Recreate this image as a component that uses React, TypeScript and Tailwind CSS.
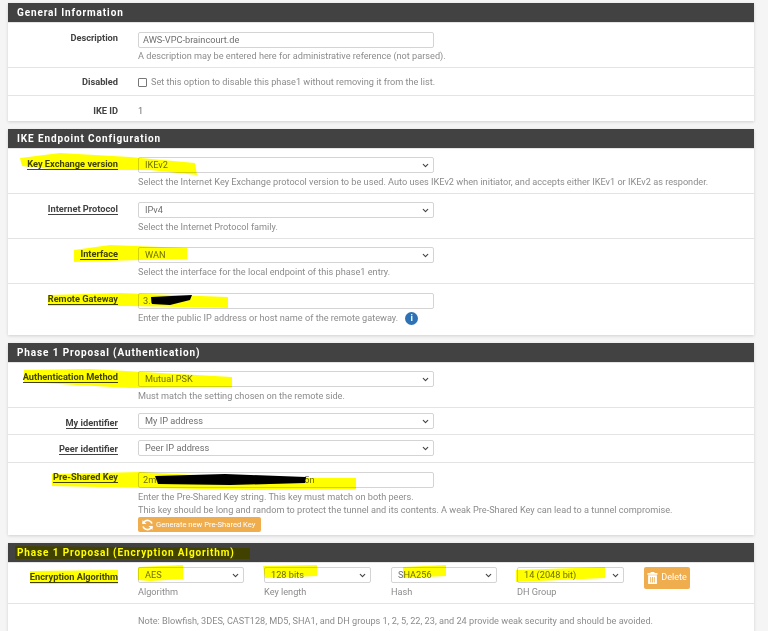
import React from 'react';
import { ChevronDown } from 'lucide-react';

const font = { fontFamily: 'Roboto, "Liberation Sans", sans-serif' };

// champ en lecture, largeur fixe
const TextBox = ({ value }: { value: string }) => (
  <div className="w-[296px] h-[16px] flex items-center px-[4px] bg-white border border-[#d4d4d4] rounded-[2px] text-[9.2px] text-[#6f6f6f] whitespace-pre">
    {value}
  </div>
);

const SelectBox = ({ value, className }: { value: string; className: string }) => (
  <div className={`h-[16px] flex items-center justify-between pl-[6px] pr-[3px] bg-white border border-[#d4d4d4] rounded-[2px] text-[9.2px] text-[#6f6f6f] ${className}`}>
    <span>{value}</span>
    <ChevronDown size={9} strokeWidth={3} className="text-[#444]" />
  </div>
);

const Help = ({ children }: { children: React.ReactNode }) => (
  <div className="text-[9.16px] leading-[13px] text-[#8c8c8c] whitespace-nowrap">{children}</div>
);

const Row = ({ label, link, className, labelClass = '', children }: { label?: string; link?: boolean; className: string; labelClass?: string; children: React.ReactNode }) => (
  <div className={`flex border-t border-[#e4e4e4] ${className}`}>
    <div className={`w-[110px] shrink-0 text-right text-[9.25px] leading-[13px] font-bold text-[#424242] ${labelClass}`}>
      <span className={link ? 'border-b border-[#424242]' : ''}>{label}</span>
    </div>
    <div className="ml-[20px] flex flex-col">{children}</div>
  </div>
);

const Panel = ({ title, children }: { title: string; children: React.ReactNode }) => (
  <section className="bg-white shadow-[0_1px_3px_rgba(0,0,0,0.15)]">
    <h2 className="h-[19px] pl-[9px] flex items-center bg-[#424242] text-white text-[10px] font-bold tracking-[0.88px]">{title}</h2>
    {children}
  </section>
);

const Caption = ({ select, caption, className }: { select: string; caption: string; className: string }) => (
  <div className="flex flex-col">
    <SelectBox value={select} className={className} />
    <div className="mt-[3px]"><Help>{caption}</Help></div>
  </div>
);

// trait de surligneur + censure, dessinés à la main sur la capture
const Marker = () => (
  <svg className="absolute left-0 top-0 w-[768px] h-[631px] pointer-events-none mix-blend-multiply" viewBox="0 0 768 631">
    <g fill="#ffff00">
      <path d="M20 158 L60 153 L130 157 L195 163 L197 175 L150 170 L60 170 L22 166 Z" />
      <path d="M74 250 L110 245 L187 248 L187 259 L140 260 L74 262 Z" />
      <path d="M48 295 L120 293 L228 297 L228 308 L130 306 L48 306 Z" />
      <path d="M24 370 L90 369 L232 377 L232 387 L130 388 L24 382 Z" />
      <path d="M52 474 L140 472 L250 478 L356 478 L356 489 L250 490 L52 486 Z" />
      <path d="M30 571 L118 570 L118 584 L30 584 Z" />
      <path d="M138 567 L183 565 L183 579 L150 581 L138 580 Z" />
      <path d="M263 566 L317 565 L317 576 L265 578 Z" />
      <path d="M403 567 L446 565 L446 576 L403 578 Z" />
      <path d="M516 570 L605 567 L605 578 L516 582 Z" />
      <path d="M15 546 L250 548 L250 559 L15 559 Z" />
    </g>
    <g fill="#000000">
      <path d="M151 297 L192 295 L190 300 L170 305 L152 304 Z" />
      <path d="M155 476 L225 474 L306 477 L305 483 L230 485 L158 484 Z" />
    </g>
  </svg>
);

export default function App() {
  return (
    <div className="relative w-[768px] h-[631px] overflow-hidden bg-[#f5f5f5] px-[8px] pt-[3px] flex flex-col gap-[8px] blur-[0.3px]" style={font}>
      <div className="w-[746px] flex flex-col gap-[8px]">
        <Panel title="General Information">
          <Row label="Description" labelClass="-mt-[1px]" className="h-[45px] pt-[9px]">
            <TextBox value="AWS-VPC-braincourt.de" />
            <div className="mt-[2px]"><Help>A description may be entered here for administrative reference (not parsed).</Help></div>
          </Row>
          <Row label="Disabled" className="h-[28px] pt-[7px]">
            <div className="flex items-center h-[14px] gap-[4px]">
              <span className="w-[9px] h-[9px] border border-[#777] rounded-[1px] bg-white" />
              <Help>Set this option to disable this phase1 without removing it from the list.</Help>
            </div>
          </Row>
          <Row label="IKE ID" className="h-[26px] pt-[8px]">
            <div className="h-[13px] flex items-center text-[9.2px] text-[#6f6f6f]">1</div>
          </Row>
        </Panel>

        <Panel title="IKE Endpoint Configuration">
          <Row label="Key Exchange version" link className="h-[45px] pt-[8px]">
            <SelectBox value="IKEv2" className="w-[296px]" />
            <div className="mt-[3px]"><Help>Select the Internet Key Exchange protocol version to be used. Auto uses IKEv2 when initiator, and accepts either IKEv1 or IKEv2 as responder.</Help></div>
          </Row>
          <Row label="Internet Protocol" link className="h-[45px] pt-[8px]">
            <SelectBox value="IPv4" className="w-[296px]" />
            <div className="mt-[3px]"><Help>Select the Internet Protocol family.</Help></div>
          </Row>
          <Row label="Interface" link className="h-[45px] pt-[8px]">
            <SelectBox value="WAN" className="w-[296px]" />
            <div className="mt-[3px]"><Help>Select the interface for the local endpoint of this phase1 entry.</Help></div>
          </Row>
          <Row label="Remote Gateway" link labelClass="-mt-[1px]" className="h-[52px] pt-[9px]">
            <TextBox value="3.0" />
            <div className="mt-[3px] flex items-center gap-[7px]">
              <Help>Enter the public IP address or host name of the remote gateway.</Help>
              <span className="w-[13px] h-[13px] rounded-full bg-[#2d72b5] text-white text-[9px] font-bold leading-[13px] text-center">i</span>
            </div>
          </Row>
        </Panel>

        <Panel title="Phase 1 Proposal (Authentication)">
          <Row label="Authentication Method" link labelClass="-mt-[1px]" className="h-[45px] pt-[8px]">
            <SelectBox value="Mutual PSK" className="w-[296px]" />
            <div className="mt-[3px]"><Help>Must match the setting chosen on the remote side.</Help></div>
          </Row>
          <Row label="My identifier" link labelClass="mt-[3px]" className="h-[27px] pt-[5px]">
            <SelectBox value="My IP address" className="w-[296px]" />
          </Row>
          <Row label="Peer identifier" link labelClass="mt-[2px]" className="h-[28px] pt-[5px]">
            <SelectBox value="Peer IP address" className="w-[296px]" />
          </Row>
          <Row label="Pre-Shared Key" link labelClass="-mt-[2px]" className="h-[73px] pt-[9px]">
            <TextBox value="2m                                                                 5n" />
            <div className="mt-[3px]">
              <Help>Enter the Pre-Shared Key string. This key must match on both peers.</Help>
              <Help>This key should be long and random to protect the tunnel and its contents. A weak Pre-Shared Key can lead to a tunnel compromise.</Help>
            </div>
            <button className="w-[123px] h-[15px] flex items-center gap-[2px] px-[3px] bg-[#f0ad4e] rounded-[2px] text-white text-[7.6px] whitespace-nowrap">
              <svg width="13" height="12" viewBox="0 0 24 24" fill="none" stroke="#fff" strokeWidth="3.5">
                <path d="M21 9A9.5 9.5 0 0 0 5 6L2 9" />
                <path d="M3 15a9.5 9.5 0 0 0 16 3l3-3" />
                <path d="M2 2v8h8" fill="#fff" stroke="none" />
                <path d="M22 22v-8h-8" fill="#fff" stroke="none" />
              </svg>
              Generate new Pre-Shared Key
            </button>
          </Row>
        </Panel>

        <Panel title="Phase 1 Proposal (Encryption Algorithm)">
          <Row label="Encryption Algorithm" link labelClass="mt-[3px]" className="h-[41px] pt-[4px]">
            <div className="flex gap-[20px]">
              <Caption select="AES" caption="Algorithm" className="w-[106px]" />
              <Caption select="128 bits" caption="Key length" className="w-[107px]" />
              <Caption select="SHA256" caption="Hash" className="w-[106px]" />
              <Caption select="14 (2048 bit)" caption="DH Group" className="w-[107px]" />
              <button className="w-[46px] h-[22px] flex items-center justify-center gap-[3px] bg-[#f0ad4e] rounded-[2px] text-white text-[9px]">
                <svg width="11" height="14" viewBox="0 0 20 24" fill="#fff">
                  <path d="M7 1h6l1 2h5v3H1V3h5z" />
                  <path d="M2 7h16v16H2z M6 10v10h1.5V10z M9.2 10v10h1.5V10z M12.5 10v10H14V10z" fillRule="evenodd" />
                </svg>
                Delete
              </button>
            </div>
          </Row>
          <Row className="h-[40px] pt-[11px]">
            <Help>Note: Blowfish, 3DES, CAST128, MD5, SHA1, and DH groups 1, 2, 5, 22, 23, and 24 provide weak security and should be avoided.</Help>
          </Row>
        </Panel>
      </div>
      <Marker />
    </div>
  );
}
